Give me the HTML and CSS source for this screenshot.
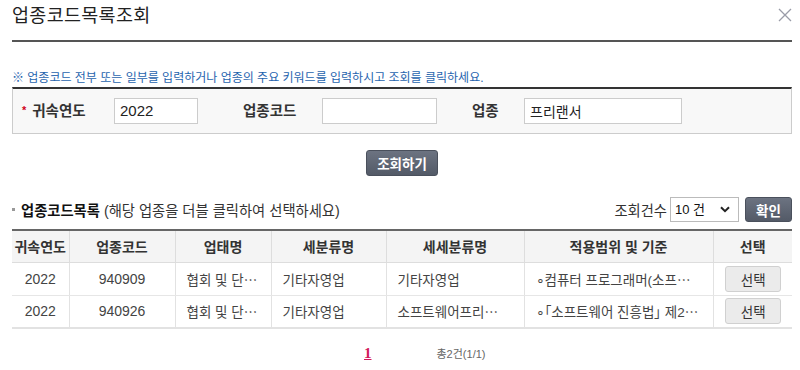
FILE: index.html
```html
<!DOCTYPE html>
<html lang="ko">
<head>
<meta charset="utf-8">
<title>업종코드목록조회</title>
<link rel="stylesheet" href="styles.css">
</head>
<body>
<div class="dialog">
  <div class="dlg-head">
    <h1 class="dlg-title">업종코드목록조회</h1>
    <button class="dlg-close" aria-label="닫기">
      <svg width="14" height="14" viewBox="0 0 14 14"><path d="M1 1L13 13M13 1L1 13" stroke="#9a9ca8" stroke-width="1.3" fill="none"/></svg>
    </button>
  </div>

  <p class="notice">※ 업종코드 전부 또는 일부를 입력하거나 업종의 주요 키워드를 입력하시고 조회를 클릭하세요.</p>

  <div class="search-box">
    <label class="lbl lbl-year"><span class="req">*</span>귀속연도</label>
    <input class="inp inp-year" type="text" value="2022">
    <label class="lbl lbl-code">업종코드</label>
    <input class="inp inp-code" type="text" value="">
    <label class="lbl lbl-name">업종</label>
    <input class="inp inp-name" type="text" value="프리랜서">
  </div>

  <div class="search-actions">
    <button class="btn-dark btn-search">조회하기</button>
  </div>

  <div class="list-head">
    <div class="list-title"><span class="bullet"></span><strong>업종코드목록</strong> (해당 업종을 더블 클릭하여 선택하세요)</div>
    <div class="list-tools">
      <span class="cnt-label">조회건수</span>
      <div class="sel-wrap">
        <select class="sel"><option>10 건</option><option>20 건</option></select>
        <svg class="sel-arrow" width="10" height="7" viewBox="0 0 10 7"><path d="M1 1.2L5 5.2L9 1.2" stroke="#222" stroke-width="2" fill="none"/></svg>
      </div>
      <button class="btn-dark btn-ok">확인</button>
    </div>
  </div>

  <table class="grid">
    <colgroup>
      <col class="c1"><col class="c2"><col class="c3"><col class="c4"><col class="c5"><col class="c6"><col class="c7">
    </colgroup>
    <thead>
      <tr><th>귀속연도</th><th>업종코드</th><th>업태명</th><th>세분류명</th><th>세세분류명</th><th>적용범위 및 기준</th><th>선택</th></tr>
    </thead>
    <tbody>
      <tr>
        <td class="num">2022</td><td class="num">940909</td><td class="txt">협회 및 단⋯</td><td class="txt">기타자영업</td><td class="txt">기타자영업</td><td class="txt">∘컴퓨터 프로그래머(소프⋯</td><td class="sel-cell"><button class="btn-pick">선택</button></td>
      </tr>
      <tr>
        <td class="num">2022</td><td class="num">940926</td><td class="txt">협회 및 단⋯</td><td class="txt">기타자영업</td><td class="txt">소프트웨어프리⋯</td><td class="txt">∘「소프트웨어 진흥법」 제2⋯</td><td class="sel-cell"><button class="btn-pick">선택</button></td>
      </tr>
    </tbody>
  </table>

  <div class="pager">
    <a class="page-cur" href="#">1</a>
    <span class="page-total">총2건(1/1)</span>
  </div>
</div>
</body>
</html>
```

FILE: styles.css
```css
* { box-sizing: border-box; }
html, body { margin: 0; padding: 0; background: #fff; }
body {
  width: 800px;
  height: 370px;
  overflow: hidden;
  font-family: "Liberation Sans", "Noto Sans CJK KR", sans-serif;
  font-size: 13px;
  color: #333;
}
.dialog { padding: 0 8px 0 12px; }

.dlg-head {
  height: 42px;
  display: flex;
  justify-content: space-between;
  align-items: flex-start;
  border-bottom: 2px solid #555;
}
.dlg-title {
  margin: 0;
  font-size: 18.5px;
  font-weight: normal;
  line-height: 32px;
  color: #222;
  letter-spacing: 0.3px;
}
.dlg-close {
  border: 0;
  background: none;
  padding: 0;
  margin: 8px 0 0 0;
  width: 14px;
  height: 14px;
  line-height: 0;
  cursor: pointer;
}

.notice {
  margin: 28px 0 0 0;
  font-size: 12px;
  line-height: 17px;
  color: #1f64ae;
  white-space: nowrap;
}

.search-box {
  display: flex;
  align-items: center;
  height: 47px;
  padding: 0 0 1px 9px;
  background: #f8f8f8;
  border: 1px solid #ccc;
  border-top: 2px solid #333;
}
.lbl {
  display: flex;
  align-items: center;
  font-size: 14.5px;
  font-weight: bold;
  color: #333;
  line-height: 20px;
}
.req { color: #d0021b; margin-right: 6px; font-size: 11px; line-height: 11px; }
.lbl-year { width: 92px; }
.lbl-code { width: 79px; margin-left: 45px; }
.lbl-name { width: 52px; margin-left: 35px; }
.inp {
  height: 26px;
  border: 1px solid #ccc;
  background: #fff;
  padding: 0 5px;
  font-family: "Liberation Sans", "Noto Sans CJK KR", sans-serif;
  font-size: 14px;
  color: #222;
  outline: none;
}
.inp-year { width: 84px; font-size: 15px; }
.inp-code { width: 115px; }
.inp-name { width: 158px; }

.search-actions {
  display: flex;
  justify-content: center;
  margin-top: 16px;
}
.btn-dark {
  border: 1px solid #4a505c;
  border-radius: 3px;
  background: linear-gradient(#6c7381, #535a67);
  color: #fff;
  font-family: "Liberation Sans", "Noto Sans CJK KR", sans-serif;
  font-weight: bold;
  font-size: 13.5px;
  padding: 0;
  cursor: pointer;
}
.btn-search { width: 72px; height: 26px; }

.list-head {
  display: flex;
  justify-content: space-between;
  align-items: center;
  margin-top: 21px;
  height: 25px;
}
.list-title {
  display: flex;
  align-items: center;
  font-size: 14.3px;
  color: #333;
  white-space: pre;
}
.list-title strong { color: #111; }
.bullet {
  width: 3px;
  height: 3px;
  background: #999;
  margin-right: 6px;
}
.list-tools {
  display: flex;
  align-items: center;
}
.cnt-label { margin-right: 3px; color: #333; font-size: 14.3px; }
.sel-wrap { position: relative; width: 69px; height: 25px; }
.sel {
  appearance: none;
  -webkit-appearance: none;
  width: 69px;
  height: 25px;
  border: 1px solid #bbb;
  background: #fff;
  padding: 0 0 0 4px;
  font-family: "Liberation Sans", "Noto Sans CJK KR", sans-serif;
  font-size: 13px;
  color: #111;
}
.sel-arrow { position: absolute; right: 9px; top: 9px; pointer-events: none; }
.btn-ok { width: 47px; height: 25px; margin-left: 6px; }

.grid {
  width: 780px;
  margin-top: 7px;
  border-collapse: collapse;
  table-layout: fixed;
  border-top: 2px solid #666;
  border-bottom: 2px solid #e2e2e2;
}
.c1 { width: 57px; } .c2 { width: 106px; } .c3 { width: 96px; } .c4 { width: 115px; }
.c5 { width: 138px; } .c6 { width: 189px; } .c7 { width: 79px; }
.grid th {
  height: 32px;
  background: #f4f4f4;
  font-size: 14px;
  font-weight: bold;
  color: #333;
  text-align: center;
  border-left: 1px solid #ddd;
  border-bottom: 1px solid #ddd;
  padding: 0;
  white-space: nowrap;
}
.grid td {
  height: 33px;
  font-size: 13.5px;
  color: #444;
  border-left: 1px solid #e2e2e2;
  border-bottom: 1px solid #e6e6e6;
  white-space: nowrap;
  overflow: hidden;
  padding: 0 4px;
  font-feature-settings: "palt";
}
.grid th:first-child, .grid td:first-child { border-left: 0; }
.grid td.num { text-align: center; font-size: 14px; padding: 0; }
.grid td.txt { text-align: left; padding-left: 11px; }
.grid td.sel-cell { text-align: center; padding: 0; }
.btn-pick {
  width: 56px;
  height: 26px;
  border: 1px solid #d0d0d0;
  border-radius: 3px;
  background: #ebebeb;
  color: #333;
  font-family: "Liberation Sans", "Noto Sans CJK KR", sans-serif;
  font-size: 13.5px;
  padding: 0;
  margin-left: 1px;
  vertical-align: middle;
}

.pager {
  display: flex;
  align-items: center;
  margin-top: 15px;
  padding-left: 352px;
  height: 18px;
}
.page-cur {
  font-family: "Liberation Serif", serif;
  font-weight: bold;
  font-size: 15px;
  color: #d2185a;
  text-decoration: underline;
}
.page-total {
  margin-left: 65px;
  font-size: 11px;
  color: #666;
}
```
